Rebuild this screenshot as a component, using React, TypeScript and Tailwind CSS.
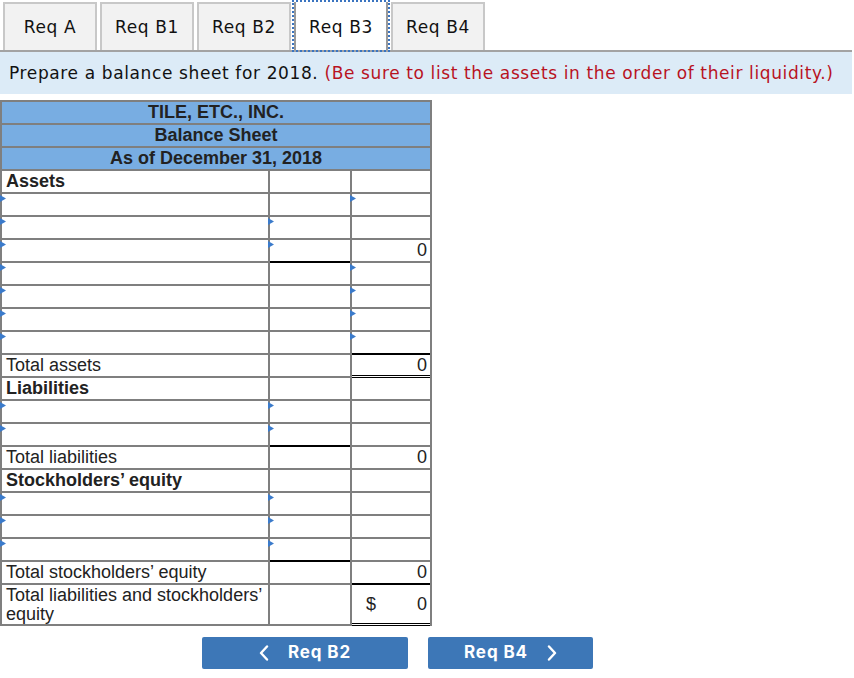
import React from "react";

type Cell = {
  text?: string;
  bold?: boolean;
  arrow?: boolean;
  num?: string;
  dollar?: boolean;
  line?: "single" | "double";
};

type Row = { cells: [Cell, Cell, Cell]; tall?: boolean };

const E: Cell = {};
const A: Cell = { arrow: true };

const rows: Row[] = [
  { cells: [{ text: "Assets", bold: true }, E, E] },
  { cells: [A, E, A] },
  { cells: [A, A, E] },
  { cells: [A, { arrow: true, line: "single" }, { num: "0" }] },
  { cells: [A, E, A] },
  { cells: [A, E, A] },
  { cells: [A, E, A] },
  { cells: [A, E, { arrow: true, line: "single" }] },
  { cells: [{ text: "Total assets" }, E, { num: "0", line: "double" }] },
  { cells: [{ text: "Liabilities", bold: true }, E, E] },
  { cells: [A, A, E] },
  { cells: [A, { arrow: true, line: "single" }, E] },
  { cells: [{ text: "Total liabilities" }, E, { num: "0" }] },
  { cells: [{ text: "Stockholders\u2019 equity", bold: true }, E, E] },
  { cells: [A, A, E] },
  { cells: [A, A, E] },
  { cells: [A, { arrow: true, line: "single" }, E] },
  { cells: [{ text: "Total stockholders\u2019 equity" }, E, { num: "0", line: "single" }] },
  {
    cells: [
      { text: "Total liabilities and stockholders\u2019 equity" },
      E,
      { num: "0", dollar: true, line: "double" },
    ],
    tall: true,
  },
];

const Arrow = () => (
  <svg
    className="absolute top-[1px] left-[-2px] z-10"
    width="6"
    height="7"
    viewBox="0 0 6 7"
  >
    <polygon points="0,0 6,3.5 0,7" fill="#3b7bcb" />
  </svg>
);

function CellView({ c, tall }: { c: Cell; tall?: boolean }) {
  const h = tall ? "h-[39px]" : "h-[21px]";
  const line =
    c.line === "single"
      ? "shadow-[0_2px_0_#000]"
      : c.line === "double"
      ? "shadow-[inset_0_-1px_0_#000,0_1px_0_#fff,0_2px_0_#000]"
      : "";
  return (
    <div className={`relative bg-white ${h} ${line}`}>
      {c.arrow && <Arrow />}
      {c.text && (
        <div
          className={`flex h-full items-center px-[4px] text-[18px] ${
            tall ? "leading-[19px]" : "leading-[21px]"
          } text-[#222] ${c.bold ? "font-bold" : ""}`}
        >
          {c.text}
        </div>
      )}
      {c.num && (
        <div className="flex h-full items-center justify-between pl-[14px] pr-[3px] text-[18px] leading-[21px] text-[#222]">
          <span>{c.dollar ? "$" : ""}</span>
          <span>{c.num}</span>
        </div>
      )}
    </div>
  );
}

const tabs = ["Req A", "Req B1", "Req B2", "Req B3", "Req B4"];

export default function App() {
  return (
    <div className="w-[854px] h-[678px] bg-white font-['Liberation_Sans',Arial,sans-serif]">
      {/* Tabs */}
      <div className="w-[852px] border-b-2 border-[#a3a3a3] pt-[2px] pl-[3px] flex gap-[3px] font-['DejaVu_Sans',Verdana,sans-serif]">
        {tabs.map((t) =>
          t === "Req B3" ? (
            <div
              key={t}
              className="w-[94px] h-[48px] pt-[3px] bg-white border-x-2 border-[#9a9a9a] outline-2 outline-dotted outline-[#3a74c0] flex items-center justify-center text-[17px] tracking-[0.6px] text-[#111]"
            >
              {t}
            </div>
          ) : (
            <div
              key={t}
              className="w-[94px] h-[48px] pt-[1px] bg-[#f2f2f2] border-x-2 border-t-2 border-[#c8c8c8] flex items-center justify-center text-[17px] tracking-[0.6px] text-[#111]"
            >
              {t}
            </div>
          )
        )}
      </div>

      {/* Instruction */}
      <div className="w-[852px] h-[42px] pt-[2px] bg-[#dcebf7] flex items-center pl-[9px] font-['DejaVu_Sans',Verdana,sans-serif] text-[17px] tracking-[0.62px] text-[#111] whitespace-nowrap">
        <span>Prepare a balance sheet for 2018.&nbsp;</span>
        <span className="text-[#b8131f]">
          (Be sure to list the assets in the order of their liquidity.)
        </span>
      </div>

      {/* Table */}
      <div className="mt-[6px] w-[432px] bg-[#7f7f7f] p-[2px] grid grid-cols-[266px_80px_78px] gap-[2px]">
        {["TILE, ETC., INC.", "Balance Sheet", "As of December 31, 2018"].map((h) => (
          <div
            key={h}
            className="col-span-3 h-[21px] bg-[#78ade2] text-center font-bold text-[18px] leading-[21px] text-[#222]"
          >
            {h}
          </div>
        ))}
        {rows.map((r, i) => (
          <React.Fragment key={i}>
            <CellView c={r.cells[0]} tall={r.tall} />
            <CellView c={r.cells[1]} tall={r.tall} />
            <CellView c={r.cells[2]} tall={r.tall} />
          </React.Fragment>
        ))}
      </div>

      {/* Buttons */}
      <div className="mt-[11px] pl-[202px] flex gap-[20px] font-['Inter',sans-serif]">
        <div className="w-[206px] h-[32px] bg-[#3d77b7] rounded-[2px] flex items-center justify-center gap-[19px] text-white font-bold text-[17px] tracking-[0.9px]">
          <svg width="10" height="16" viewBox="0 0 10 16">
            <polyline points="8,1.5 2,8 8,14.5" fill="none" stroke="#fff" strokeWidth="2.4" strokeLinecap="round" strokeLinejoin="round" />
          </svg>
          <span>Req B2</span>
        </div>
        <div className="w-[165px] h-[32px] bg-[#3d77b7] rounded-[2px] flex items-center justify-center gap-[19px] text-white font-bold text-[17px] tracking-[0.9px]">
          <span>Req B4</span>
          <svg width="10" height="16" viewBox="0 0 10 16">
            <polyline points="2,1.5 8,8 2,14.5" fill="none" stroke="#fff" strokeWidth="2.4" strokeLinecap="round" strokeLinejoin="round" />
          </svg>
        </div>
      </div>
    </div>
  );
}
